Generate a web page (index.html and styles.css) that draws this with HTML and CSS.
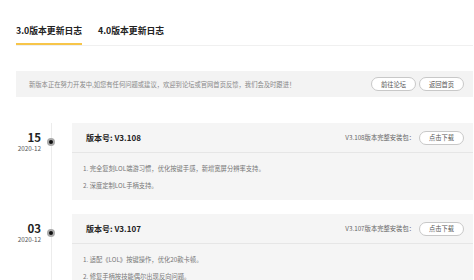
FILE: index.html
```html
<!DOCTYPE html>
<html lang="zh-CN">
<head>
    <meta charset="UTF-8">
    <meta name="viewport" content="width=device-width, initial-scale=1.0">
    <link rel="stylesheet" href="styles.css">
    <title>版本更新日志</title>
</head>
<body>

<div class="tabs">
    <div class="tab active">3.0版本更新日志</div>
    <div class="tab">4.0版本更新日志</div>
</div>

<div class="notice">
    <p>新版本正在努力开发中,如您有任何问题或建议，欢迎到论坛或官网首页反馈，我们会及时跟进！</p>
    <div class="notice-btns">
        <button class="pill">前往论坛</button>
        <button class="pill">返回首页</button>
    </div>
</div>

<div class="timeline">
    <div class="item">
        <div class="date">
            <div class="day">15</div>
            <div class="month">2020-12</div>
        </div>
        <div class="axis"><span class="dot"></span></div>
        <div class="card">
            <div class="card-head">
                <h3>版本号: V3.108</h3>
                <div class="download">
                    <span>V3.108版本完整安装包：</span>
                    <button class="pill">点击下载</button>
                </div>
            </div>
            <ul class="card-body">
                <li>1. 完全复刻LOL端游习惯，优化按键手感，新增宽屏分辨率支持。</li>
                <li>2. 深度定制LOL手柄支持。</li>
            </ul>
        </div>
    </div>

    <div class="item">
        <div class="date">
            <div class="day">03</div>
            <div class="month">2020-12</div>
        </div>
        <div class="axis"><span class="dot"></span></div>
        <div class="card">
            <div class="card-head">
                <h3>版本号: V3.107</h3>
                <div class="download">
                    <span>V3.107版本完整安装包：</span>
                    <button class="pill">点击下载</button>
                </div>
            </div>
            <ul class="card-body">
                <li>1. 适配《LOL》按键操作，优化20款卡顿。</li>
                <li>2. 修复手柄按技能偶尔出现反向问题。</li>
            </ul>
        </div>
    </div>
</div>

</body>
</html>
```

FILE: styles.css
```css
body {
    margin: 0;
    padding: 0 1px 0 16px;
    font-family: "Noto Sans CJK SC", "Noto Sans", sans-serif;
    color: #333;
    background: #fff;
}

/* tabs */
.tabs {
    display: flex;
    gap: 16px;
    height: 45px;
    align-items: flex-end;
    border-bottom: 1px solid #f0f0f0;
}

.tab {
    font-size: 8.8px;
    font-weight: bold;
    line-height: 12px;
    padding-bottom: 6px;
    border-bottom: 2px solid transparent;
    color: #222;
}

.tab.active {
    border-bottom-color: #f7c549;
}

/* notice bar */
.notice {
    margin-top: 25px;
    height: 26px;
    background: #f3f3f3;
    display: flex;
    align-items: center;
    justify-content: space-between;
    padding: 0 9px 0 13px;
}

.notice p {
    margin: 0;
    font-size: 6.3px;
    color: #888;
}

.notice-btns {
    display: flex;
    gap: 3px;
}

.pill {
    width: 45px;
    height: 14px;
    padding: 0;
    border: 1px solid #c8c8c8;
    border-radius: 8px;
    background: #fff;
    font-family: inherit;
    font-size: 6.3px;
    color: #555;
}

/* timeline */
.timeline {
    margin-top: 26px;
}

.item {
    display: grid;
    grid-template-columns: 25px 20px 1fr;
}

.date {
    text-align: right;
    padding-top: 7px;
}

.day {
    font-size: 11.5px;
    font-weight: bold;
    line-height: 14px;
    color: #222;
}

.month {
    font-size: 6.3px;
    line-height: 10px;
    color: #555;
}

.axis {
    display: flex;
    justify-content: center;
    align-items: flex-start;
    background: linear-gradient(#ececec, #ececec) center / 1px 100% no-repeat;
}

.dot {
    width: 4px;
    height: 4px;
    margin-top: 15px;
    border-radius: 50%;
    background: #111;
    border: 2px solid #aaa;
}

.card {
    margin: 0 0 14px 11px;
    background: #f5f5f5;
}

.card-head {
    height: 29px;
    display: flex;
    align-items: center;
    justify-content: space-between;
    padding: 0 9px 0 14px;
    border-bottom: 1px solid #e6e6e6;
}

.card-head h3 {
    margin: 0;
    font-size: 8px;
    font-weight: bold;
    color: #222;
}

.download {
    display: flex;
    align-items: center;
    gap: 4px;
}

.download span {
    font-size: 6.3px;
    color: #666;
}

.card-body {
    list-style: none;
    margin: 0;
    padding: 8px 0 6px 11px;
}

.card-body li {
    font-size: 6.3px;
    line-height: 16.5px;
    color: #777;
}
```
